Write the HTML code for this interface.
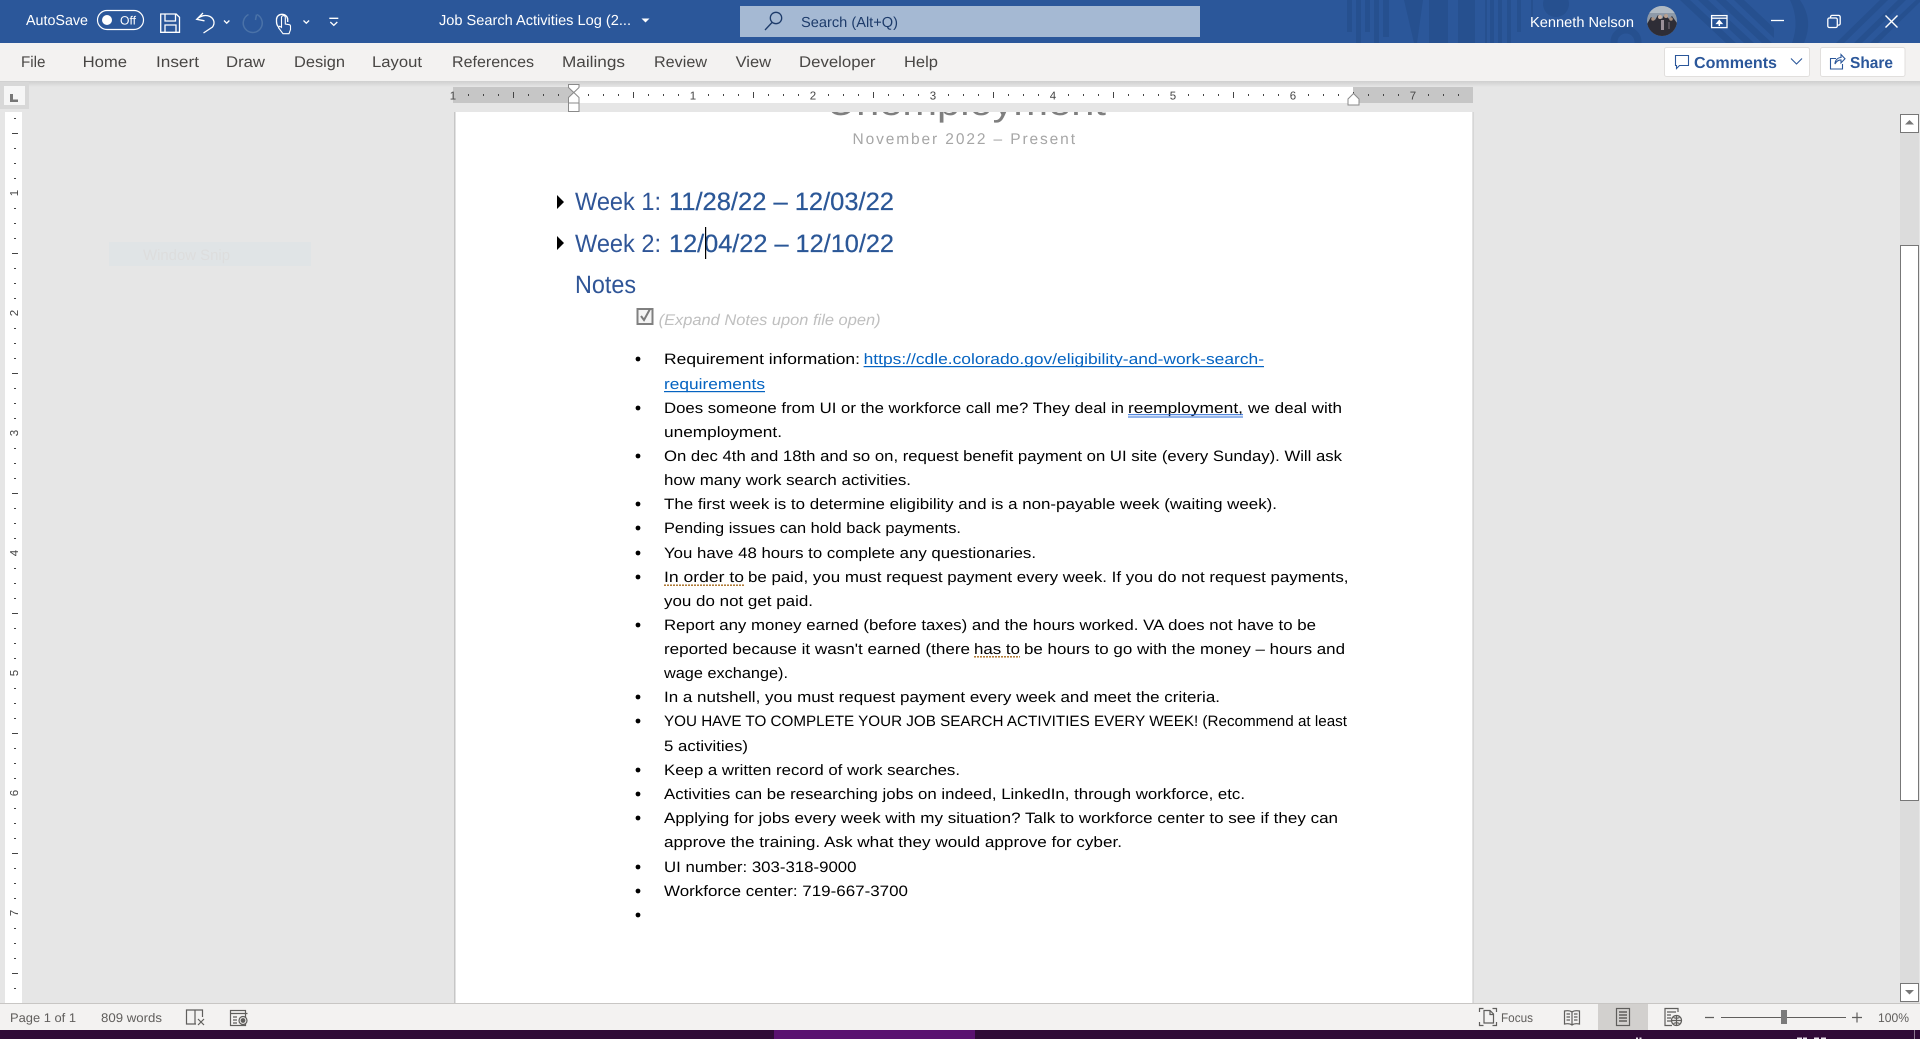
<!DOCTYPE html>
<html lang="en"><head><meta charset="utf-8"><title>Job Search Activities Log</title>
<style>
html,body{margin:0;padding:0;width:1920px;height:1039px;overflow:hidden;background:#e6e6e6}
svg{display:block}
text{font-family:"Liberation Sans",sans-serif;text-rendering:geometricPrecision;white-space:pre}
.d{font-size:15px;fill:#000}
.l{font-size:15px;fill:#0563c1}
.w{font-size:25px;fill:#2f5597}
.wd{font-size:25px;fill:#2b5797;stroke:#2b5797;stroke-width:.25}
.r{font-size:15.5px;fill:#484644}
.tb{font-size:14.5px;fill:#fff}
.st{font-size:12.5px;fill:#605e5c}
.n{font-size:11.5px;fill:#444;text-anchor:middle}
.ic{fill:none;stroke:#fff;stroke-width:1.3}
.si{fill:none;stroke:#5f5e5c;stroke-width:1.2}
</style></head><body>
<svg width="1920" height="1039" viewBox="0 0 1920 1039" xmlns="http://www.w3.org/2000/svg">
<defs>
<pattern id="hr" x="453" y="87" width="120" height="16" patternUnits="userSpaceOnUse">
<rect x="15" y="7" width="1" height="2" fill="#444"/><rect x="30" y="7" width="1" height="2" fill="#444"/><rect x="45" y="7" width="1" height="2" fill="#444"/><rect x="60" y="5" width="1" height="6" fill="#444"/><rect x="75" y="7" width="1" height="2" fill="#444"/><rect x="90" y="7" width="1" height="2" fill="#444"/><rect x="105" y="7" width="1" height="2" fill="#444"/>
</pattern>
<pattern id="vr" x="5" y="73" width="17" height="120" patternUnits="userSpaceOnUse">
<rect x="9" y="15" width="2" height="1" fill="#444"/><rect x="9" y="30" width="2" height="1" fill="#444"/><rect x="9" y="45" width="2" height="1" fill="#444"/><rect x="7" y="60" width="6" height="1" fill="#444"/><rect x="9" y="75" width="2" height="1" fill="#444"/><rect x="9" y="90" width="2" height="1" fill="#444"/><rect x="9" y="105" width="2" height="1" fill="#444"/>
</pattern>
<linearGradient id="sh" x1="0" y1="0" x2="0" y2="1"><stop offset="0" stop-color="#cfcfcf"/><stop offset="1" stop-color="#e6e6e6"/></linearGradient>
<clipPath id="av"><circle cx="1662" cy="21" r="15"/></clipPath>
<clipPath id="tbclip"><rect x="1340" y="0" width="580" height="43"/></clipPath>
</defs>

<!-- backgrounds -->
<rect width="1920" height="1039" fill="#e6e6e6"/>
<rect width="1920" height="43" fill="#2b579a"/>

<!-- title bar pattern -->
<g clip-path="url(#tbclip)" fill="#26508f">
<rect x="1347" y="0" width="5" height="32"/><rect x="1356" y="0" width="5" height="43"/><rect x="1365" y="0" width="5" height="32"/><rect x="1374" y="0" width="5" height="43"/><rect x="1383" y="0" width="6" height="37"/>
<path d="M1404 0h19l-6 43h-3z"/><rect x="1429" y="0" width="19" height="43"/><rect x="1458" y="0" width="17" height="43"/>
<rect x="1485" y="0" width="2" height="43"/><rect x="1490" y="0" width="4" height="43"/><rect x="1498" y="0" width="4" height="43"/><rect x="1507" y="0" width="4" height="43"/><rect x="1517" y="0" width="4" height="32"/><rect x="1531" y="0" width="2" height="20"/>
<circle cx="1556" cy="4" r="13"/>
<circle cx="1626" cy="42" r="12" fill="none" stroke="#26508f" stroke-width="7"/>
<path d="M1680 0h10l46 43h-10zM1698 0h10l46 43h-10zM1716 0h10l46 43h-10zM1734 0h10l30 28v10z"/>
<path d="M1790 0h10q14 20 4 43h-12q8-22-2-43z"/>
<path d="M1880 0h8l-44 43h-8zM1898 0h8l-44 43h-8zM1916 0h6l-44 43h-8z"/>
</g>

<!-- QAT -->
<text class="tb" x="26" y="25" textLength="62" lengthAdjust="spacingAndGlyphs">AutoSave</text>
<rect x="97.500" y="10.500" width="46" height="19" rx="9.500" fill="none" stroke="#fff" stroke-width="1.2"/>
<circle cx="107" cy="20" r="5" fill="#fff"/>
<text x="120" y="24.500" style="font-size:12px;fill:#fff" textLength="16" lengthAdjust="spacingAndGlyphs">Off</text>
<g class="ic">
<path d="M160.700 14h15.500l3.300 3.300v15h-18.800zM165 14v7h10.500v-7M165 32.300v-7.300h11v7.300"/>
<path d="M203 13l-6.300 6.300 7.800 1.500M197 19c4-3.500 9-4.500 13-2.500 4.500 2.500 5 7 2.500 10.500l-9 6"/>
<path d="M224 20.500l2.700 2.700 2.700-2.700"/>
<path d="M303.500 20.500l2.800 2.700 2.800-2.700"/>
<path d="M329.300 18.300h9M330.300 22l3.500 3.300 3.500-3.300"/>
<path d="M282 29c-3-1-5.500-3.500-5.500-7.500v-2c0-3 2.500-5.200 5.500-5.200s5.700 2.200 5.700 5.200v2.500"/>
<path d="M281.500 25v-8a2 2 0 0 1 3.800 0v7l4 .7c.7.2 1.200.8 1.200 1.500v3.500l-1.500 4h-6l-4.500-6 1.200-1.500 1.800 1.200z" fill="#2b579a" stroke-width="1.1"/>
</g>
<g fill="none" stroke="#4a72a8" stroke-width="1.5"><path d="M248.500 14.500a9.500 9.500 0 1 0 8.500 0"/><path d="M256.500 14.500l-1 5.500"/></g>

<!-- doc title -->
<text class="tb" x="439" y="25" textLength="192" lengthAdjust="spacingAndGlyphs">Job Search Activities Log (2...</text>
<path d="M641.500 18.500h8l-4 4z" fill="#fff"/>

<!-- search -->
<rect x="740" y="6" width="460" height="31" fill="#a5b9d3"/>
<g fill="none" stroke="#1d3b6a" stroke-width="1.3"><circle cx="776" cy="18" r="5.700"/><path d="M772 22.500l-7 7.500"/></g>
<text x="801" y="27" style="font-size:14.5px;fill:#1d3b6a" textLength="97" lengthAdjust="spacingAndGlyphs">Search (Alt+Q)</text>

<!-- right title -->
<text class="tb" x="1530" y="27" textLength="104" lengthAdjust="spacingAndGlyphs">Kenneth Nelson</text>
<g clip-path="url(#av)">
<rect x="1647" y="6" width="30" height="30" fill="#8d99a8"/>
<rect x="1647" y="6" width="30" height="7" fill="#b0bac4"/>
<path d="M1647 24l4-7 4 3 3-5 4 4 3-5 4 5 3-3 5 7v14h-30z" fill="#2e2d36"/>
<circle cx="1660" cy="17" r="2" fill="#c9b3a4"/><circle cx="1666" cy="16" r="2" fill="#b8a090"/><circle cx="1653" cy="19" r="1.800" fill="#a89080"/><circle cx="1671" cy="19" r="1.800" fill="#a89080"/><rect x="1661" y="20" width="3" height="10" fill="#9a8f98"/><rect x="1668" y="22" width="2" height="7" fill="#55505a"/>
</g>
<g class="ic">
<rect x="1711.600" y="15.600" width="15.400" height="12"/><path d="M1712 18.200h15"/><path d="M1719.300 26v-5.500" stroke-width="1.500"/><path d="M1716.800 23.500l2.500-3 2.500 3z" fill="#fff"/>
<path d="M1771 20.500h13"/>
<rect x="1827.800" y="18" width="9.500" height="9.500" rx="1.500"/><path d="M1830.500 17.500v-.5a1.600 1.600 0 0 1 1.600-1.600h6.500a1.600 1.600 0 0 1 1.600 1.600v6.500a1.600 1.600 0 0 1-1.600 1.600h-1"/>
<path d="M1885.500 15.500l12 12M1897.500 15.500l-12 12" stroke-width="1.400"/>
</g>

<!-- ribbon -->
<rect y="43" width="1920" height="38" fill="#f3f2f1"/>
<rect y="81" width="1920" height="6" fill="url(#sh)"/>
<text class="r" x="21" y="67" textLength="24.500" lengthAdjust="spacingAndGlyphs">File</text>
<text class="r" x="82.600" y="67" textLength="44.500" lengthAdjust="spacingAndGlyphs">Home</text>
<text class="r" x="156" y="67" textLength="43" lengthAdjust="spacingAndGlyphs">Insert</text>
<text class="r" x="226" y="67" textLength="39" lengthAdjust="spacingAndGlyphs">Draw</text>
<text class="r" x="294" y="67" textLength="51" lengthAdjust="spacingAndGlyphs">Design</text>
<text class="r" x="372" y="67" textLength="50" lengthAdjust="spacingAndGlyphs">Layout</text>
<text class="r" x="452" y="67" textLength="82" lengthAdjust="spacingAndGlyphs">References</text>
<text class="r" x="562" y="67" textLength="63" lengthAdjust="spacingAndGlyphs">Mailings</text>
<text class="r" x="654" y="67" textLength="53" lengthAdjust="spacingAndGlyphs">Review</text>
<text class="r" x="735.600" y="67" textLength="35.500" lengthAdjust="spacingAndGlyphs">View</text>
<text class="r" x="799" y="67" textLength="76.500" lengthAdjust="spacingAndGlyphs">Developer</text>
<text class="r" x="904" y="67" textLength="34" lengthAdjust="spacingAndGlyphs">Help</text>

<!-- comments/share -->
<rect x="1664.500" y="47.500" width="145" height="29" rx="2" fill="#fff" stroke="#e1dfdd"/>
<path d="M1675.500 55.500h13v10h-9l-3 3v-3h-1z" fill="none" stroke="#2b579a" stroke-width="1.100"/>
<text x="1694" y="68" style="font-size:16px;fill:#2b579a;font-weight:bold" textLength="83" lengthAdjust="spacingAndGlyphs">Comments</text>
<path d="M1791 58.500l5.500 5.500 5.500-5.500" fill="none" stroke="#2b579a" stroke-width="1.100"/>
<rect x="1820.500" y="47.500" width="84.500" height="29" rx="2" fill="#fff" stroke="#e1dfdd"/>
<path d="M1836 58.500h-5.500v10.500h12v-5M1835 64c0-4 3-6.500 6-6.500v-3l4 4.200-4 4.200v-3c-3 0-5 2-6 4.100z" fill="none" stroke="#2b579a" stroke-width="1.100"/>
<text x="1850" y="68" style="font-size:16px;fill:#2b579a;font-weight:bold" textLength="43" lengthAdjust="spacingAndGlyphs">Share</text>

<!-- page -->
<rect x="455" y="112" width="1018" height="891" fill="#fff"/>
<rect x="454" y="112" width="1.500" height="891" fill="#c6c6c6"/>
<rect x="1472.500" y="112" width="1" height="891" fill="#c6c6c6"/>

<!-- title clipped -->
<text x="826" y="115" style="font-size:37px;fill:#7f7f7f" textLength="280" lengthAdjust="spacingAndGlyphs">Unemployment</text>
<rect x="440" y="87" width="1050" height="25" fill="#e6e6e6"/>

<!-- horizontal ruler -->
<rect x="453" y="87" width="120.500" height="16" fill="#c6c6c6"/>
<rect x="573" y="87" width="780" height="16" fill="#fff"/>
<rect x="1353" y="87" width="120" height="16" fill="#c6c6c6"/>
<rect x="453" y="87" width="1020" height="16" fill="url(#hr)"/>
<text class="n" x="453" y="99.500">1</text>
<text class="n" x="693" y="99.500">1</text><text class="n" x="813" y="99.500">2</text><text class="n" x="933" y="99.500">3</text><text class="n" x="1053" y="99.500">4</text><text class="n" x="1173" y="99.500">5</text><text class="n" x="1293" y="99.500">6</text><text class="n" x="1413" y="99.500">7</text>
<g fill="#fff" stroke="#8a8a8a" stroke-width="1">
<path d="M568.500 84.500h10.500v3l-5.200 5-5.300-5z"/><path d="M573.800 92.500l5.200 5v5.500h-10.500v-5.500z"/><rect x="568.500" y="103" width="10.500" height="8.500"/>
<path d="M1353.500 93.500l5.500 5.500v6h-11v-6z"/>
</g>

<!-- tab selector and vertical ruler -->
<rect x="0" y="82" width="29" height="27" fill="#d8d8d8"/>
<rect x="4" y="86" width="21" height="19" fill="#f6f6f6"/>
<path d="M10 94h3v5.500h5v2.500h-8z" fill="#777"/>
<rect x="5" y="112" width="17" height="891" fill="#fff"/>
<rect x="5" y="112" width="17" height="891" fill="url(#vr)"/>
<text class="n" transform="translate(18,193) rotate(-90)">1</text>
<text class="n" transform="translate(18,313) rotate(-90)">2</text>
<text class="n" transform="translate(18,433) rotate(-90)">3</text>
<text class="n" transform="translate(18,553) rotate(-90)">4</text>
<text class="n" transform="translate(18,673) rotate(-90)">5</text>
<text class="n" transform="translate(18,793) rotate(-90)">6</text>
<text class="n" transform="translate(18,913) rotate(-90)">7</text>

<!-- window snip ghost -->
<rect x="109" y="242" width="202" height="24" fill="#e0e4e6"/>
<text x="143" y="260" style="font-size:15px;fill:#dddddd" textLength="87" lengthAdjust="spacingAndGlyphs">Window Snip</text>

<!-- doc headings -->
<text x="852.500" y="144" style="font-size:15.500px;fill:#a6a6a6" textLength="222.500" lengthAdjust="spacing">November 2022 – Present</text>
<path d="M557 195l7 7-7 7z M557 236l7 7-7 7z" fill="#000"/>
<text class="w" x="575" y="210" textLength="86" lengthAdjust="spacingAndGlyphs">Week 1:</text>
<text class="wd" x="669" y="210" textLength="225" lengthAdjust="spacingAndGlyphs">11/28/22 – 12/03/22</text>
<text class="w" x="575" y="252" textLength="86" lengthAdjust="spacingAndGlyphs">Week 2:</text>
<text class="wd" x="669" y="252" textLength="225" lengthAdjust="spacingAndGlyphs">12/04/22 – 12/10/22</text>
<rect x="705" y="227" width="1.200" height="32" fill="#000"/>
<text class="w" x="575" y="293" textLength="61" lengthAdjust="spacingAndGlyphs">Notes</text>

<rect x="637.500" y="309" width="15" height="15" fill="#f4f4f4" stroke="#808080" stroke-width="2"/>
<path d="M641 316l3 4 6-11" fill="none" stroke="#7a7a7a" stroke-width="2"/>
<text x="658.600" y="325" style="font-size:15.500px;font-style:italic;fill:#bfbfbf" textLength="222" lengthAdjust="spacingAndGlyphs">(Expand Notes upon file open)</text>

<!-- bullets -->
<g fill="#000">
<circle cx="638" cy="359" r="2.400"/><circle cx="638" cy="408" r="2.400"/><circle cx="638" cy="456" r="2.400"/><circle cx="638" cy="504" r="2.400"/><circle cx="638" cy="528" r="2.400"/><circle cx="638" cy="553" r="2.400"/><circle cx="638" cy="577" r="2.400"/><circle cx="638" cy="625" r="2.400"/><circle cx="638" cy="697" r="2.400"/><circle cx="638" cy="721" r="2.400"/><circle cx="638" cy="770" r="2.400"/><circle cx="638" cy="794" r="2.400"/><circle cx="638" cy="818" r="2.400"/><circle cx="638" cy="867" r="2.400"/><circle cx="638" cy="891" r="2.400"/><circle cx="638" cy="915" r="2.400"/>
</g>

<!-- body text -->
<text class="d" x="664" y="364" textLength="196" lengthAdjust="spacingAndGlyphs">Requirement information:</text>
<text class="l" x="863.600" y="364" textLength="400.400" lengthAdjust="spacingAndGlyphs">https://cdle.colorado.gov/eligibility-and-work-search-</text>
<rect x="863.600" y="366" width="400.400" height="1.200" fill="#0563c1"/>
<text class="l" x="664" y="389" textLength="101" lengthAdjust="spacingAndGlyphs">requirements</text>
<rect x="664" y="391" width="101" height="1.200" fill="#0563c1"/>

<text class="d" x="664" y="413" textLength="460" lengthAdjust="spacingAndGlyphs">Does someone from UI or the workforce call me? They deal in</text>
<text class="d" x="1128" y="413" textLength="115" lengthAdjust="spacingAndGlyphs">reemployment,</text>
<text class="d" x="1248" y="413" textLength="94" lengthAdjust="spacingAndGlyphs">we deal with</text>
<rect x="1128" y="414.200" width="115" height="1" fill="#2b6cd9"/><rect x="1128" y="416.500" width="115" height="1" fill="#2b6cd9"/>
<text class="d" x="664" y="437" textLength="118" lengthAdjust="spacingAndGlyphs">unemployment.</text>
<text class="d" x="664" y="461" textLength="678" lengthAdjust="spacingAndGlyphs">On dec 4th and 18th and so on, request benefit payment on UI site (every Sunday). Will ask</text>
<text class="d" x="664" y="485" textLength="247" lengthAdjust="spacingAndGlyphs">how many work search activities.</text>
<text class="d" x="664" y="509" textLength="613" lengthAdjust="spacingAndGlyphs">The first week is to determine eligibility and is a non-payable week (waiting week).</text>
<text class="d" x="664" y="533" textLength="297" lengthAdjust="spacingAndGlyphs">Pending issues can hold back payments.</text>
<text class="d" x="664" y="558" textLength="372" lengthAdjust="spacingAndGlyphs">You have 48 hours to complete any questionaries.</text>
<text class="d" x="664" y="582" textLength="80" lengthAdjust="spacingAndGlyphs">In order to</text>
<text class="d" x="748" y="582" textLength="600.500" lengthAdjust="spacingAndGlyphs">be paid, you must request payment every week. If you do not request payments,</text>
<line x1="664" y1="585.200" x2="744" y2="585.200" stroke="#a5691c" stroke-width="1.400" stroke-dasharray="2 1"/>
<text class="d" x="664" y="606" textLength="149" lengthAdjust="spacingAndGlyphs">you do not get paid.</text>
<text class="d" x="664" y="630" textLength="652" lengthAdjust="spacingAndGlyphs">Report any money earned (before taxes) and the hours worked. VA does not have to be</text>
<text class="d" x="664" y="654" textLength="306" lengthAdjust="spacingAndGlyphs">reported because it wasn't earned (there</text>
<text class="d" x="974" y="654" textLength="46" lengthAdjust="spacingAndGlyphs">has to</text>
<text class="d" x="1024" y="654" textLength="321" lengthAdjust="spacingAndGlyphs">be hours to go with the money – hours and</text>
<line x1="974" y1="656.800" x2="1020" y2="656.800" stroke="#a5691c" stroke-width="1.400" stroke-dasharray="2 1"/>
<text class="d" x="664" y="678" textLength="124" lengthAdjust="spacingAndGlyphs">wage exchange).</text>
<text class="d" x="664" y="702" textLength="556" lengthAdjust="spacingAndGlyphs">In a nutshell, you must request payment every week and meet the criteria.</text>
<text class="d" x="664" y="726" textLength="683" lengthAdjust="spacingAndGlyphs">YOU HAVE TO COMPLETE YOUR JOB SEARCH ACTIVITIES EVERY WEEK! (Recommend at least</text>
<text class="d" x="664" y="751" textLength="84" lengthAdjust="spacingAndGlyphs">5 activities)</text>
<text class="d" x="664" y="775" textLength="296" lengthAdjust="spacingAndGlyphs">Keep a written record of work searches.</text>
<text class="d" x="664" y="799" textLength="581" lengthAdjust="spacingAndGlyphs">Activities can be researching jobs on indeed, LinkedIn, through workforce, etc.</text>
<text class="d" x="664" y="823" textLength="674" lengthAdjust="spacingAndGlyphs">Applying for jobs every week with my situation? Talk to workforce center to see if they can</text>
<text class="d" x="664" y="847" textLength="458" lengthAdjust="spacingAndGlyphs">approve the training. Ask what they would approve for cyber.</text>
<text class="d" x="664" y="872" textLength="192.500" lengthAdjust="spacingAndGlyphs">UI number: 303-318-9000</text>
<text class="d" x="664" y="896" textLength="244" lengthAdjust="spacingAndGlyphs">Workforce center: 719-667-3700</text>

<!-- scrollbar -->
<rect x="1900" y="114" width="19" height="889" fill="#dcdcdc"/>
<rect x="1900.500" y="114.500" width="18" height="18" fill="#fff" stroke="#777"/>
<path d="M1909.500 120l4.500 4.500h-9z" fill="#777"/>
<rect x="1900.500" y="245.500" width="18" height="555" fill="#fff" stroke="#777"/>
<rect x="1900.500" y="983.500" width="18" height="18" fill="#fff" stroke="#777"/>
<path d="M1905 990h9l-4.500 4.500z" fill="#777"/>

<!-- status bar -->
<rect y="1003" width="1920" height="27" fill="#f3f2f1"/>
<rect y="1003" width="1920" height="1" fill="#c8c6c4"/>
<text class="st" x="10" y="1022" textLength="66" lengthAdjust="spacingAndGlyphs">Page 1 of 1</text>
<text class="st" x="101" y="1022" textLength="61" lengthAdjust="spacingAndGlyphs">809 words</text>
<g class="si">
<path d="M196 1024h-9.500v-14h16v7M195 1010v14"/><path d="M198 1019l6 6M204 1019l-6 6"/>
<rect x="230.500" y="1010.500" width="15" height="15"/><path d="M230.500 1013.500h17"/><path d="M233 1017h4M233 1020h4M233 1023h4"/><circle cx="243" cy="1020.500" r="4" fill="#f3f2f1"/><circle cx="243" cy="1020.500" r="1.800" fill="#5f5e5c"/>
<path d="M1479.500 1012v-3.500h4M1492.500 1008.500h4v3.500M1496.500 1022v3.500h-4M1483.500 1025.500h-4v-3.500"/><path d="M1484 1023v-12.500h6l3.500 3.500v9zM1490 1010.500v4h3.500"/>
<path d="M1572 1012c-2-1.500-5-1.500-7.500-1v13c2.500-.5 5.500-.5 7.500 1 2-1.500 5-1.500 7.500-1v-13c-2.500-.5-5.500-.5-7.500 1zM1572 1012v13M1566.500 1014h3.500M1566.500 1017h3.500M1566.500 1020h3.500M1574 1014h3.500M1574 1017h3.500M1574 1020h3.500"/>
</g>
<text class="st" x="1501" y="1022" textLength="32" lengthAdjust="spacingAndGlyphs">Focus</text>
<rect x="1598" y="1004" width="50" height="26" fill="#d2d0ce"/>
<g class="si">
<rect x="1616.500" y="1008.500" width="13" height="17"/><path d="M1619 1012h8M1619 1015h8M1619 1018h8M1619 1021h8" stroke-width="1.600"/>
<path d="M1678 1012v-3.500h-13v17h7"/><path d="M1667 1012h9M1667 1015h4M1667 1018h4M1667 1021h4"/><circle cx="1676.500" cy="1020.500" r="5" fill="#f3f2f1"/><path d="M1671.500 1020.500h10M1676.500 1015.500v10M1673.500 1017.500c2 1 4 1 6 0M1673.500 1023.500c2-1 4-1 6 0"/>
<path d="M1705 1017.500h9M1852 1017.500h10M1857 1012.500v10"/>
</g>
<rect x="1721" y="1017" width="125" height="1" fill="#605e5c"/>
<rect x="1781" y="1010" width="6" height="14" fill="#7a7a7a"/>
<text class="st" x="1878" y="1022" textLength="31" lengthAdjust="spacingAndGlyphs">100%</text>

<!-- taskbar strip -->
<rect y="1030" width="1920" height="9" fill="#2f0a36"/>
<rect x="774" y="1030" width="201" height="9" fill="#5a1170"/>
<rect x="1636" y="1037.500" width="2" height="1.500" fill="#e8e0ea"/><rect x="1639.500" y="1037.500" width="2" height="1.500" fill="#e8e0ea"/>
<rect x="1797" y="1037.500" width="5" height="1.500" fill="#e8e0ea"/><rect x="1803" y="1037.500" width="4" height="1.500" fill="#e8e0ea"/><rect x="1814" y="1037.500" width="5" height="1.500" fill="#e8e0ea"/><rect x="1821" y="1037.500" width="5" height="1.500" fill="#e8e0ea"/>
<rect x="1914" y="1030" width="1" height="9" fill="#8c7a90"/>
</svg>
</body></html>
